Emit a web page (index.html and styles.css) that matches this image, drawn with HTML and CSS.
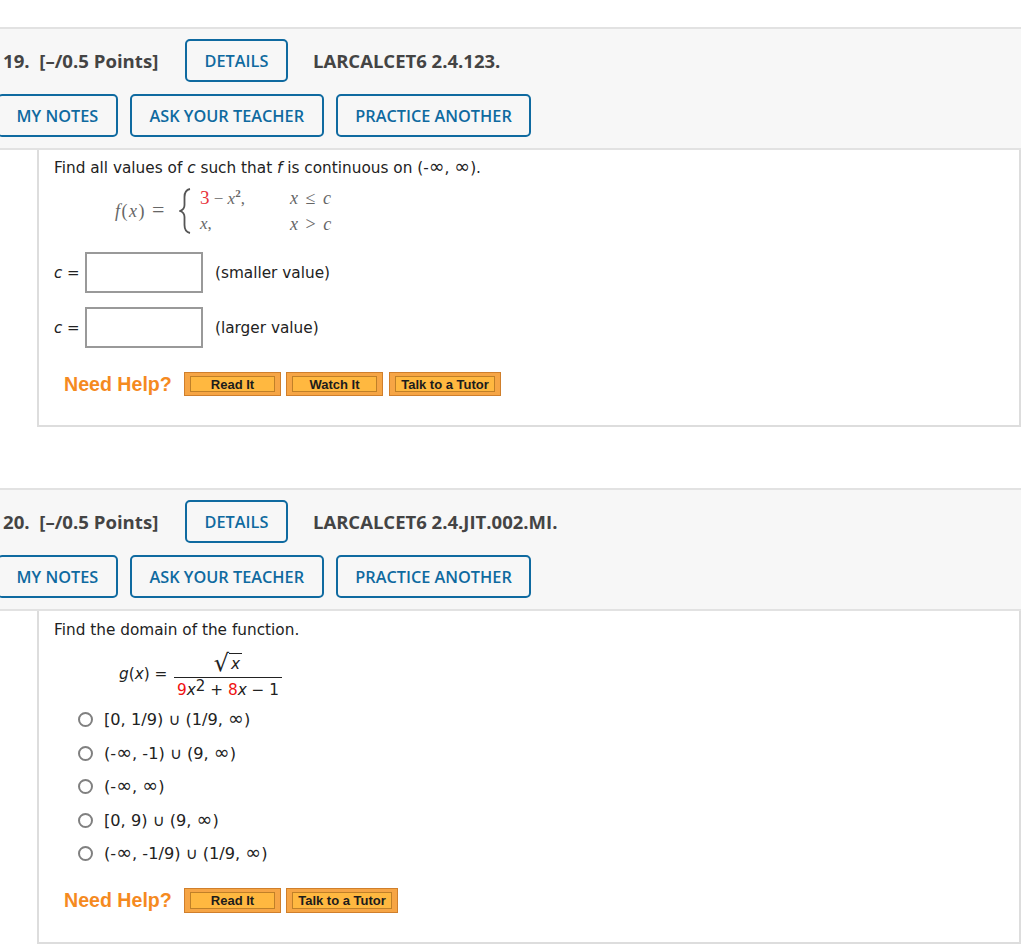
FILE: index.html
```html
<!DOCTYPE html>
<html lang="en">
<head>
<meta charset="utf-8">
<title>Questions</title>
<link rel="stylesheet" href="styles.css">
</head>
<body>
<main class="page">
  <section class="question">
    <header class="q-head">
      <div class="q-row">
        <h2 class="q-num">19.&nbsp; [–/0.5 Points]</h2>
        <a class="btn">DETAILS</a>
        <span class="q-code">LARCALCET6 2.4.123.</span>
      </div>
      <div class="q-row q-actions">
        <a class="btn btn-notes">MY NOTES</a>
        <a class="btn">ASK YOUR TEACHER</a>
        <a class="btn">PRACTICE ANOTHER</a>
      </div>
    </header>
    <div class="q-body body-one">
      <p class="prompt">Find all values of <i>c</i> such that <i>f</i> is continuous on (-<span class="inf">∞</span>, <span class="inf">∞</span>).</p>
      <div class="piecewise">
        <span class="pw-name"><i>f</i>(<i>x</i>) <span class="pw-eq">=</span></span>
        <svg class="brace" width="12" height="46" viewBox="0 0 12 46" aria-hidden="true"><path d="M11 1C6.5 2 5.5 5 5.5 9V17C5.5 20 4 22 1 23C4 24 5.5 26 5.5 29V37C5.5 41 6.5 44 11 45" fill="none" stroke="#555" stroke-width="1.8"/></svg>
        <div class="pw-grid">
          <span><span class="pw-three">3</span> − <i>x</i><sup>2</sup>,</span><span class="pw-cond"><i>x</i> ≤ <i>c</i></span>
          <span><i>x</i>,</span><span class="pw-cond"><i>x</i> &gt; <i>c</i></span>
        </div>
      </div>
      <div class="answer answer-first"><span class="ans-label"><i>c</i> =</span><span class="ans-box"></span><span class="ans-note">(smaller value)</span></div>
      <div class="answer answer-second"><span class="ans-label"><i>c</i> =</span><span class="ans-box"></span><span class="ans-note">(larger value)</span></div>
      <div class="help">
        <span class="help-label">Need Help?</span>
        <a class="help-btn w-read"><span>Read It</span></a>
        <a class="help-btn w-watch"><span>Watch It</span></a>
        <a class="help-btn w-talk"><span>Talk to a Tutor</span></a>
      </div>
    </div>
  </section>

  <section class="question second">
    <header class="q-head">
      <div class="q-row">
        <h2 class="q-num">20.&nbsp; [–/0.5 Points]</h2>
        <a class="btn">DETAILS</a>
        <span class="q-code">LARCALCET6 2.4.JIT.002.MI.</span>
      </div>
      <div class="q-row q-actions">
        <a class="btn btn-notes">MY NOTES</a>
        <a class="btn">ASK YOUR TEACHER</a>
        <a class="btn">PRACTICE ANOTHER</a>
      </div>
    </header>
    <div class="q-body body-two">
      <p class="prompt prompt-two">Find the domain of the function.</p>
      <div class="formula">
        <span class="f-name"><i>g</i>(<i>x</i>) =</span>
        <div class="frac">
          <span class="f-top"><span class="root">√</span><span class="radicand"><i>x</i></span></span>
          <span class="f-bottom"><span class="red">9</span><i>x</i><sup>2</sup> + <span class="red">8</span><i>x</i> − 1</span>
        </div>
      </div>
      <ul class="choices">
        <li><span class="radio"></span><span>[0, 1/9) ∪ (1/9, <span class="inf">∞</span>)</span></li>
        <li><span class="radio"></span><span>(-<span class="inf">∞</span>, -1) ∪ (9, <span class="inf">∞</span>)</span></li>
        <li><span class="radio"></span><span>(-<span class="inf">∞</span>, <span class="inf">∞</span>)</span></li>
        <li><span class="radio"></span><span>[0, 9) ∪ (9, <span class="inf">∞</span>)</span></li>
        <li><span class="radio"></span><span>(-<span class="inf">∞</span>, -1/9) ∪ (1/9, <span class="inf">∞</span>)</span></li>
      </ul>
      <div class="help help-two">
        <span class="help-label">Need Help?</span>
        <a class="help-btn w-read"><span>Read It</span></a>
        <a class="help-btn w-talk"><span>Talk to a Tutor</span></a>
      </div>
    </div>
  </section>
</main>
</body>
</html>
```
FILE: styles.css
```css
* { box-sizing: border-box; }
html, body { margin: 0; padding: 0; background: #fff; }
body { height: 952px; overflow: hidden; font-family: "DejaVu Sans", Verdana, sans-serif; font-size: 15.3px; color: #222; }
.page { width: 1021px; padding-top: 27px; }
.second { margin-top: 61px; }
.inf { font-size: 19px; line-height: 0; }

.q-head { height: 123px; background: #f7f7f7; border-top: 2px solid #e2e2e2; border-bottom: 2px solid #e2e2e2; padding-top: 10px; }
.q-row { display: flex; align-items: center; height: 43px; font-family: "Open Sans", sans-serif; }
.q-actions { margin-top: 12px; margin-left: -3px; gap: 12px; }
.q-num { margin: 0 0 0 3px; width: 182px; font-size: 18.6px; font-weight: 700; color: #444; white-space: nowrap; }
.q-code { margin-left: 25px; font-size: 18.5px; font-weight: 700; color: #444; white-space: nowrap; }
.btn { display: flex; align-items: center; height: 43px; padding: 0 17.6px; border: 2px solid #0f6aa0; border-radius: 5px; font-size: 16.3px; font-weight: 600; color: #0f6aa0; white-space: nowrap; }

.q-body { margin-left: 37px; border-left: 2px solid #ddd; border-right: 2px solid #ddd; border-bottom: 2px solid #ddd; padding-left: 15px; }
.body-one { height: 277px; }
.body-two { height: 333px; }
.prompt { margin: 0; padding-top: 9px; line-height: 18px; white-space: nowrap; }
.prompt-two { padding-top: 10px; }

.piecewise { display: flex; align-items: center; height: 52px; margin: 8px 0 0 61px; font-family: "Liberation Serif", serif; font-size: 17px; color: #666; }
.pw-name { width: 64px; font-size: 18px; letter-spacing: 1.5px; white-space: nowrap; }
.pw-eq { font-size: 22px; line-height: 0; }
.brace { margin-right: 9px; }
.pw-grid { display: grid; grid-template-columns: 90px auto; row-gap: 5px; line-height: 20px; }
.pw-cond { font-size: 18px; word-spacing: 3px; }
.pw-grid sup { font-size: 11px; font-weight: bold; line-height: 0; }
.pw-three { font-size: 19px; color: #e8333a; }
.red { color: #f01010; }

.answer { display: flex; align-items: center; gap: 11px; white-space: nowrap; }
.answer-first { margin-top: 15px; }
.answer-second { margin-top: 14px; }
.ans-label { width: 25px; margin-right: -5px; font-size: 15px; }
.ans-box { width: 118px; height: 41px; background: #fff; border: 2px solid #999; }
.ans-note { margin-left: 1px; padding-top: 1px; }

.help { display: flex; align-items: center; margin: 24px 0 0 10px; height: 24px; }
.help-two { margin-top: 17px; height: 25px; }
.help-label { width: 120px; font-family: "Liberation Sans", sans-serif; font-size: 19.6px; font-weight: 700; color: #f58a1f; white-space: nowrap; }
.help-btn { display: block; height: 100%; margin-right: 5px; padding: 3px 5px; background: #f6a545; border: 1px solid #d07f2c; }
.help-btn span { display: flex; align-items: center; justify-content: center; height: 100%; background: #ffb840; border: 1px solid #c08028; font-family: "Liberation Sans", sans-serif; font-size: 13px; font-weight: 700; color: #1c1c1c; white-space: nowrap; }
.w-read { width: 97px; }
.w-watch { width: 97px; margin-right: 6px; }
.w-talk { width: 112px; }

.formula { display: flex; align-items: center; margin: 10px 0 0 65px; height: 55px; }
.f-name { width: 55px; margin-bottom: 5px; white-space: nowrap; }
.frac { display: flex; flex-direction: column; align-items: center; width: 108px; }
.f-top { display: flex; align-items: flex-end; justify-content: center; width: 100%; height: 27px; border-bottom: 1px solid #222; }
.root { font-size: 24px; line-height: 28px; }
.radicand { margin-bottom: 3px; padding: 0 2px; border-top: 1px solid #222; line-height: 20px; }
.f-bottom { line-height: 24px; white-space: nowrap; }
.f-bottom sup { font-size: 15px; line-height: 0; vertical-align: 4px; }

.choices { list-style: none; margin: -1px 0 0 24px; padding: 0; font-size: 16.2px; }
.choices li { display: flex; align-items: center; height: 33.5px; white-space: nowrap; }
.radio { flex: none; width: 15px; height: 15px; margin-right: 11px; border: 2px solid #808080; border-radius: 50%; background: #fff; }
```
